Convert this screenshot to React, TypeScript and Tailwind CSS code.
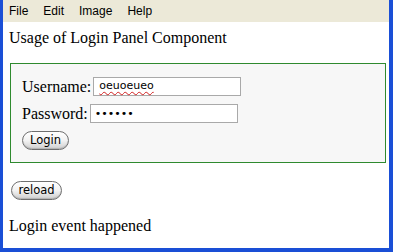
import React from "react";

function AquaButton({ label, className = "" }: { label: string; className?: string }) {
  return (
    <button
      className={`flex h-[19px] items-center justify-center rounded-full border border-[#6f6f6f] bg-gradient-to-b from-white via-[#f2f2f2] to-[#cfcfcf] px-0 text-[11.5px] leading-none text-black shadow-[inset_0_-1px_1px_rgba(0,0,0,0.15)] ${className}`}
      style={{ fontFamily: '"DejaVu Sans", "Liberation Sans", sans-serif' }}
    >
      {label}
    </button>
  );
}

export default function App() {
  return (
    <div className="h-[252px] w-[393px] overflow-hidden bg-[#1a4fd6] pl-[3px] pr-[4px] pb-[4px]">
      <div className="flex h-full flex-col bg-white">
        {/* menu bar */}
        <div
          className="flex h-[22px] items-center gap-[15px] bg-[#ece9d8] pl-[6px] text-[12px] text-black"
          style={{ fontFamily: '"Liberation Sans", Arial, sans-serif' }}
        >
          <span>File</span>
          <span>Edit</span>
          <span>Image</span>
          <span>Help</span>
        </div>

        <div
          className="flex flex-col items-start pl-[6px] pr-[3px] text-[16px] text-black"
          style={{ fontFamily: '"Liberation Serif", "Times New Roman", serif' }}
        >
          <h1 className="mt-[7px] leading-[18px]">Usage of Login Panel Component</h1>

          {/* login panel */}
          <div className="ml-[1px] mt-[16px] h-[100px] w-[376px] border border-[#2f8a2f] bg-[#f7f7f7] pl-[11px] pt-[13px]">
            <div className="flex h-[19px] items-center">
              <span>Username:</span>
              <div
                className="ml-[2px] flex h-[19px] w-[148px] items-center border border-[#a9a9a9] bg-white px-[5px] text-[11px] text-black"
                style={{ fontFamily: '"DejaVu Sans", "Liberation Sans", sans-serif' }}
              >
                <span className="underline decoration-wavy decoration-[#d02020] decoration-1 underline-offset-[2px]">
                  oeuoeueo
                </span>
              </div>
            </div>
            <div className="mt-[8px] flex h-[19px] items-center">
              <span>Password:</span>
              <input
                readOnly
                type="password"
                value="oeuoeu"
                className="ml-[2px] h-[19px] w-[148px] border border-[#a9a9a9] bg-white px-[4px] text-[11px] text-black outline-none"
                style={{ fontFamily: '"DejaVu Sans", "Liberation Sans", sans-serif' }}
              />
            </div>
            <AquaButton label="Login" className="mt-[8px] w-[47px]" />
          </div>

          <AquaButton label="reload" className="mt-[18px] ml-[2px] w-[51px]" />

          <p className="mt-[17px] leading-[18px]">Login event happened</p>
        </div>
      </div>
    </div>
  );
}
